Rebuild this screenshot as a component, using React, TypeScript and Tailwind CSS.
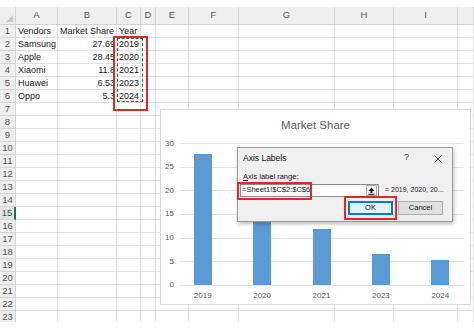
import React from "react"

// column widths of the sheet, row header first
const colWidths = [16, 42, 59, 24, 15, 33, 50, 96, 59, 64, 16]
const colNames = ["", "A", "B", "C", "D", "E", "F", "G", "H", "I", ""]

const rows: Record<number, [string, string, string]> = {
  1: ["Vendors", "Market Share", "Year"],
  2: ["Samsung", "27.69", "2019"],
  3: ["Apple", "28.45", "2020"],
  4: ["Xiaomi", "11.8", "2021"],
  5: ["Huawei", "6.53", "2023"],
  6: ["Oppo", "5.3", "2024"],
}

const bars = [
  { year: "2019", value: 27.69 },
  { year: "2020", value: 28.45 },
  { year: "2021", value: 11.8 },
  { year: "2023", value: 6.53 },
  { year: "2024", value: 5.3 },
]

const ticks = [30, 25, 20, 15, 10, 5, 0]

export default function App() {
  return (
    <div className="relative w-[474px] h-[328px] overflow-hidden bg-white font-['Liberation_Sans',Arial,sans-serif] text-[#222]">
      <div className="pt-[7px] h-[322px] overflow-hidden">
        {/* column headers */}
        <div className="flex h-[18px]">
          {colWidths.map((w, i) => (
            <div
              key={i}
              className="relative flex items-center justify-center bg-[#efefef] border-r border-b border-[#d4d4d4] text-[9.5px] text-[#555]"
              style={{ width: w }}
            >
              {i === 0 ? (
                <span className="absolute right-[2px] bottom-[2px] w-0 h-0 border-l-[7px] border-l-transparent border-b-[7px] border-b-[#c8c8c8]" />
              ) : (
                colNames[i]
              )}
            </div>
          ))}
        </div>
        {Array.from({ length: 23 }, (_, r) => r + 1).map((n) => (
          <SheetRow key={n} n={n} />
        ))}
      </div>

      {/* selection marks around the Year column */}
      <div className="absolute left-[113px] top-[36px] w-[35px] h-[75px] border-2 border-[#e3262a]" />
      <div className="absolute left-[117px] top-[38px] w-[26px] h-[64px] border-[1.5px] border-dashed border-[#217346]" />

      {/* chart */}
      <div className="absolute left-[160px] top-[109px] w-[311px] h-[196px] bg-white border border-[#d9d9d9]">
        <div className="pt-[7px] text-center text-[11.5px] leading-[16px] text-[#595959]">Market Share</div>
        <div className="relative mt-[10px] h-[143px] flex flex-col justify-between">
          {ticks.map((t) => (
            <div key={t} className="flex items-center h-px">
              <span className="w-[13px] text-right text-[8px] leading-none text-[#595959]">{t}</span>
              <div className="ml-[6px] mr-[7px] flex-1 h-px bg-[#e4e4e4]" />
            </div>
          ))}
          <div className="absolute left-[12px] right-0 top-0 bottom-[1px] flex items-end">
            {bars.map((b) => (
              <div key={b.year} className="flex-1 flex justify-center items-end h-full">
                <div className="w-[18px] bg-[#5b9bd5]" style={{ height: `${(b.value / 30) * 142}px` }} />
              </div>
            ))}
          </div>
        </div>
        <div className="flex ml-[12px] mt-[5px]">
          {bars.map((b) => (
            <div key={b.year} className="flex-1 text-center text-[8px] leading-[10px] text-[#595959]">
              {b.year}
            </div>
          ))}
        </div>
      </div>

      {/* Axis Labels dialog */}
      <div className="absolute left-[237px] top-[147px] w-[216px] h-[75px] bg-[#f0f0f0] border border-[#9a9a9a] shadow-[1px_2px_4px_rgba(0,0,0,0.25)]">
        <div className="flex items-center h-[20px] pl-[5px] pr-[10px] text-[8.5px] text-[#111]">
          <span className="flex-1">Axis Labels</span>
          <span className="mr-[25px] text-[9px] text-[#333]">?</span>
          <svg width="8" height="8" viewBox="0 0 8 8" className="mt-px">
            <path d="M0.5 0.5 L7.5 7.5 M7.5 0.5 L0.5 7.5" stroke="#333" strokeWidth="0.9" />
          </svg>
        </div>
        <div className="pl-[5px] mt-[4px] text-[7.5px] leading-[9px] text-[#111]">
          <span className="underline">A</span>xis label range:
        </div>
        <div className="flex items-center mt-[3px] pl-[2px]">
          <div className="flex items-center w-[139px] h-[13px] bg-white border border-[#8a8a8a]">
            <span className="flex-1 pl-[1px] text-[7.5px] leading-none text-[#111]">
              =Sheet1!$C$2:$C$6<span className="inline-block w-px h-[9px] bg-[#111] align-middle" />
            </span>
            <div className="flex items-center justify-center w-[11px] h-[11px] mr-px border border-[#adadad] bg-[#f7f7f7]">
              <svg width="7" height="8" viewBox="0 0 7 8">
                <path d="M3.5 0.5 L6.5 4 L4.5 4 L4.5 6 L2.5 6 L2.5 4 L0.5 4 Z" fill="#111" />
                <rect x="0.5" y="6.8" width="6" height="1" fill="#111" />
              </svg>
            </div>
          </div>
          <span className="ml-[6px] text-[7px] text-[#222] whitespace-nowrap">= 2019, 2020, 20...</span>
        </div>
        <div className="flex justify-end gap-[5px] mt-[4px] pr-[9px]">
          <div className="flex items-center justify-center w-[45px] h-[14px] bg-[#e5f1fb] border-2 border-[#0078d7] text-[7.5px] text-[#111]">
            OK
          </div>
          <div className="flex items-center justify-center w-[45px] h-[14px] bg-[#e1e1e1] border border-[#adadad] text-[7.5px] text-[#111]">
            Cancel
          </div>
        </div>
      </div>

      {/* callouts */}
      <div className="absolute left-[237px] top-[182px] w-[75px] h-[18px] border-2 border-[#e3262a]" />
      <div className="absolute left-[344px] top-[196px] w-[53px] h-[24px] border-2 border-[#e3262a]" />
    </div>
  )
}

function SheetRow({ n }: { n: number }) {
  const data = rows[n]
  const active = n === 15
  return (
    <div className="flex h-[13px]">
      {colWidths.map((w, i) => {
        if (i === 0) {
          return (
            <div
              key={i}
              className={`flex items-center justify-center border-r border-b text-[9.5px] ${
                active
                  ? "bg-[#e3e3e3] border-b-[#d4d4d4] border-r-2 border-r-[#217346] text-[#1e5e3a]"
                  : "bg-[#efefef] border-[#d4d4d4] text-[#555]"
              }`}
              style={{ width: w }}
            >
              {n}
            </div>
          )
        }
        let content: string | null = null
        let align = "justify-start pl-[2px]"
        if (data && i >= 1 && i <= 3) {
          content = data[i - 1]
          if (n > 1 && i >= 2) align = "justify-end pr-px"
        }
        return (
          <div
            key={i}
            className={`flex items-center ${align} border-r border-b border-[#e1e1e1] text-[9px] leading-[12px] whitespace-nowrap`}
            style={{ width: w }}
          >
            {content}
          </div>
        )
      })}
    </div>
  )
}
